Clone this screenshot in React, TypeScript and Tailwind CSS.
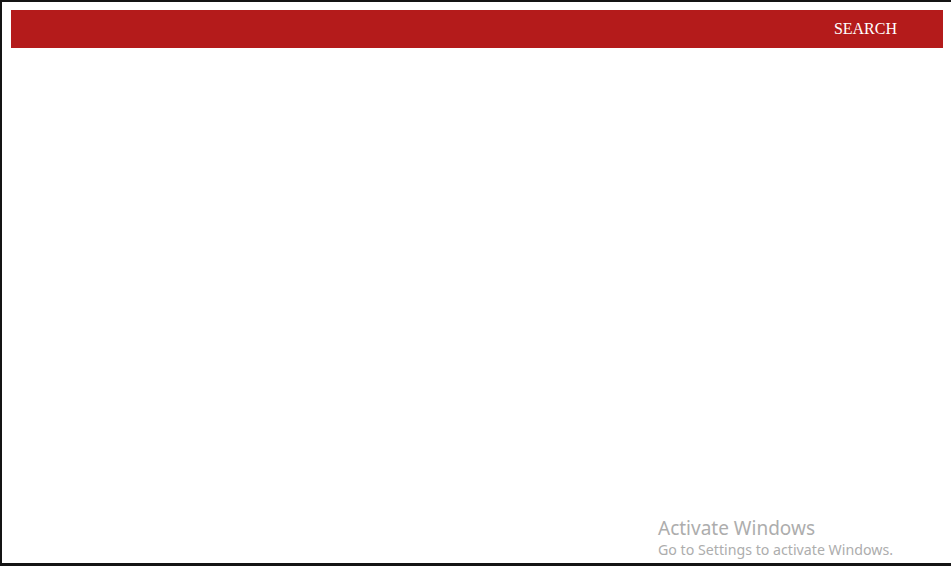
import React from 'react';

const App: React.FC = () => {
  return (
    <div className="relative h-[566px] w-[951px] overflow-hidden bg-white border-t-2 border-l-2 border-b-[3px] border-[#141414]">
      <div className="pt-2 pl-[9px] pr-2">
        <nav className="flex h-[38px] items-center justify-end bg-[#b41b1b] pr-[46px]">
          <span className="text-[16px] text-white uppercase" style={{ fontFamily: '"Liberation Serif", serif' }}>Search</span>
        </nav>
      </div>

      <div className="absolute left-[656px] top-[514px] text-[#adadad]" style={{ fontFamily: '"Noto Sans", sans-serif' }}>
        <p className="text-[19px] leading-6">Activate Windows</p>
        <p className="text-[14.2px] leading-5">Go to Settings to activate Windows.</p>
      </div>
    </div>
  );
};

export default App;
